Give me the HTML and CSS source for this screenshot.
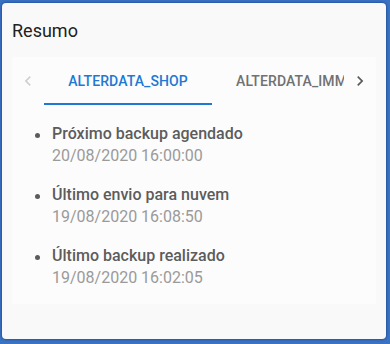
FILE: index.html
```html
<!DOCTYPE html>
<html lang="pt-BR">
<head>
<meta charset="utf-8">
<link rel="stylesheet" href="styles.css">
</head>
<body>
<div class="card">
  <h2 class="title">Resumo</h2>
  <div class="panel">
    <div class="tabs">
      <button class="scroll-btn disabled" aria-label="anterior">
        <svg viewBox="0 0 24 24" width="20" height="20"><path d="M15.41 16.59L10.83 12l4.58-4.59L14 6l-6 6 6 6 1.41-1.41z" fill="currentColor"/></svg>
      </button>
      <div class="scroller">
        <div class="tab active">ALTERDATA_SHOP<span class="indicator"></span></div>
        <div class="tab">ALTERDATA_IMMOBILE</div>
      </div>
      <button class="scroll-btn" aria-label="próximo">
        <svg viewBox="0 0 24 24" width="20" height="20"><path d="M8.59 16.59L13.17 12 8.59 7.41 10 6l6 6-6 6-1.41-1.41z" fill="currentColor"/></svg>
      </button>
    </div>
    <ul class="list">
      <li class="item">
        <span class="dot"></span>
        <div class="texts">
          <div class="primary">Próximo backup agendado</div>
          <div class="secondary">20/08/2020 16:00:00</div>
        </div>
      </li>
      <li class="item">
        <span class="dot"></span>
        <div class="texts">
          <div class="primary">Último envio para nuvem</div>
          <div class="secondary">19/08/2020 16:08:50</div>
        </div>
      </li>
      <li class="item">
        <span class="dot"></span>
        <div class="texts">
          <div class="primary">Último backup realizado</div>
          <div class="secondary">19/08/2020 16:02:05</div>
        </div>
      </li>
    </ul>
  </div>
</div>
</body>
</html>
```
FILE: styles.css
```css
* { box-sizing: border-box; }
html, body { margin: 0; height: 100%; }
body {
  background: #3a73c2;
  padding: 3px 4px 5px 2px;
  font-family: Roboto, "Noto Sans", Arial, sans-serif;
}
.card {
  height: 336px;
  background: #f9f9f9;
  border-radius: 4px;
  padding: 16px 10px 0 10px;
  display: flex;
  flex-direction: column;
  box-shadow: 0 0 2px 1px rgba(20, 60, 130, 0.5);
}
.title {
  margin: 0 0 14px 0;
  font-size: 18px;
  font-weight: 400;
  line-height: 24px;
  color: #212121;
}
.panel {
  background: #fcfcfc;
  border-radius: 2px;
  padding-bottom: 15px;
}
.tabs {
  display: flex;
  height: 48px;
}
.scroll-btn {
  width: 32px;
  flex: none;
  border: 0;
  background: none;
  padding: 0;
  display: flex;
  align-items: center;
  justify-content: center;
  color: #5a5a5a;
}
.scroll-btn.disabled { color: #d0d0d0; }
.scroll-btn svg { display: block; }
.scroller {
  flex: 1;
  display: flex;
  overflow: hidden;
  white-space: nowrap;
}
.tab {
  position: relative;
  flex: none;
  min-width: 168px;
  height: 48px;
  padding: 0 24px;
  display: flex;
  align-items: center;
  font-size: 14px;
  font-weight: 500;
  letter-spacing: 0.1px;
  color: #717171;
}
.tab.active { color: #1f78d4; width: 168px; justify-content: center; padding: 0; }
.indicator {
  position: absolute;
  left: 0;
  right: 0;
  bottom: 0;
  height: 2px;
  background: #1f78d4;
}
.list {
  list-style: none;
  margin: 18px 0 0 0;
  padding: 0 0 0 23px;
  display: flex;
  flex-direction: column;
  gap: 17px;
}
.item {
  display: flex;
  align-items: flex-start;
}
.dot {
  width: 5px;
  height: 5px;
  border-radius: 50%;
  background: #5c5c5c;
  margin-top: 10px;
  margin-right: 12px;
  flex: none;
}
.primary {
  font-size: 16px;
  font-weight: 500;
  line-height: 22px;
  color: #5c5c5c;
}
.secondary {
  font-size: 16px;
  font-weight: 400;
  line-height: 22px;
  color: #9a9a9a;
}
```
